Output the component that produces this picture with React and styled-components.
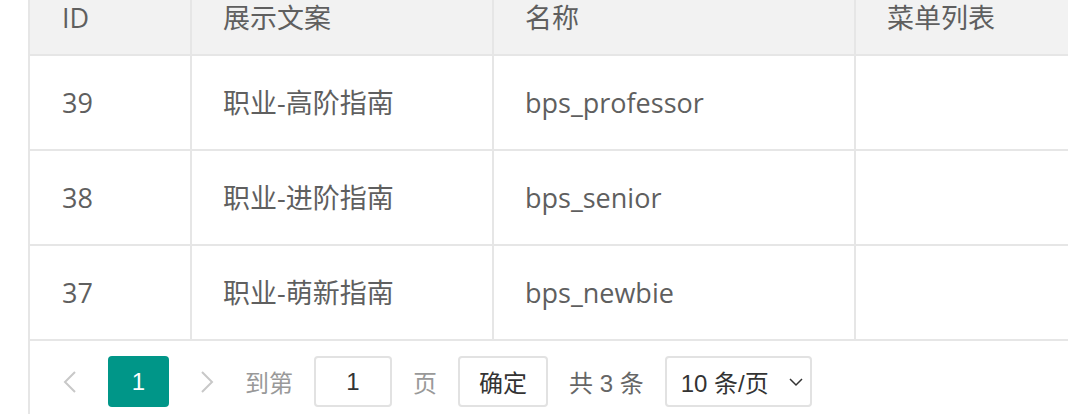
import React from "react";
import styled, { createGlobalStyle } from "styled-components";

const GlobalStyle = createGlobalStyle`
  html, body {
    margin: 0;
    padding: 0;
    background: #fff;
    overflow: hidden;
  }
  body {
    font-family: "Open Sans", "Noto Sans CJK SC", sans-serif;
    color: #666;
  }
`;

const Page = styled.div`
  width: 1068px;
  height: 414px;
  padding-left: 28px;
  box-sizing: border-box;
  overflow: hidden;
`;

const TableBox = styled.div`
  width: 1300px;
  height: 414px;
  border-left: 2px solid #e6e6e6;
  box-sizing: border-box;
`;

const Row = styled.div`
  display: grid;
  grid-template-columns: 160px 302px 362px 1fr;
  height: ${(p) => (p.$head ? "56px" : "95px")};
  background: ${(p) => (p.$head ? "#f2f2f2" : "#fff")};
  border-bottom: 2px solid #e6e6e6;
  box-sizing: border-box;
`;

const Cell = styled.div`
  display: flex;
  align-items: ${(p) => (p.$head ? "flex-start" : "center")};
  padding-top: ${(p) => (p.$head ? "1px" : "0")};
  padding-left: ${(p) => (p.$first ? "32px" : "31px")};
  border-left: ${(p) => (p.$first ? "none" : "2px solid #e6e6e6")};
  font-size: 27px;
  line-height: 34px;
  color: #5f5f5f;
  white-space: nowrap;
`;

const Pager = styled.div`
  display: flex;
  align-items: center;
  gap: 21px;
  padding: 15px 0 0 23px;
  font-family: "Liberation Sans", "Noto Sans CJK SC", sans-serif;
  font-size: 24px;
`;

const Arrow = styled.div`
  width: 34px;
  height: 51px;
  display: flex;
  align-items: center;
  justify-content: center;
`;

const Current = styled.div`
  width: 61px;
  height: 51px;
  border-radius: 4px;
  background: #009688;
  color: #fff;
  display: flex;
  align-items: center;
  justify-content: center;
  font-size: 24px;
`;

const Label = styled.span`
  color: ${(p) => p.$color || "#999"};
  white-space: nowrap;
`;

const Box = styled.div`
  width: ${(p) => p.$w}px;
  height: 51px;
  border: 2px solid #e2e2e2;
  border-radius: 4px;
  box-sizing: border-box;
  display: flex;
  align-items: center;
  justify-content: ${(p) => p.$justify || "center"};
  padding: ${(p) => p.$pad || "0"};
  color: #333;
  font-size: 24px;
  white-space: nowrap;
`;

const Chevron = ({ dir }) => (
  <svg width="14" height="24" viewBox="0 0 14 24" fill="none">
    <polyline
      points={dir === "left" ? "12,2 2,12 12,22" : "2,2 12,12 2,22"}
      stroke="#c8c8c8"
      strokeWidth="2"
    />
  </svg>
);

const rows = [
  { id: 39, text: "职业-高阶指南", name: "bps_professor" },
  { id: 38, text: "职业-进阶指南", name: "bps_senior" },
  { id: 37, text: "职业-萌新指南", name: "bps_newbie" },
];

const App = () => {
  return (
    <Page>
      <GlobalStyle />
      <TableBox>
        <Row $head>
          <Cell $head $first>ID</Cell>
          <Cell $head>展示文案</Cell>
          <Cell $head>名称</Cell>
          <Cell $head>菜单列表</Cell>
        </Row>
        {rows.map((r) => (
          <Row key={r.id}>
            <Cell $first>{r.id}</Cell>
            <Cell>{r.text}</Cell>
            <Cell>{r.name}</Cell>
            <Cell />
          </Row>
        ))}
        <Pager>
          <Arrow><Chevron dir="left" /></Arrow>
          <Current>1</Current>
          <Arrow><Chevron dir="right" /></Arrow>
          <Label>到第</Label>
          <Box $w={78}>1</Box>
          <Label>页</Label>
          <Box $w={90}>确定</Box>
          <Label $color="#666">共 3 条</Label>
          <Box $w={147} $justify="space-between" $pad="0 6px 0 14px">
            10 条/页
            <svg width="16" height="10" viewBox="0 0 16 10" fill="none">
              <polyline points="2,2 8,8 14,2" stroke="#333" strokeWidth="1.5" />
            </svg>
          </Box>
        </Pager>
      </TableBox>
    </Page>
  );
};

export default App;
